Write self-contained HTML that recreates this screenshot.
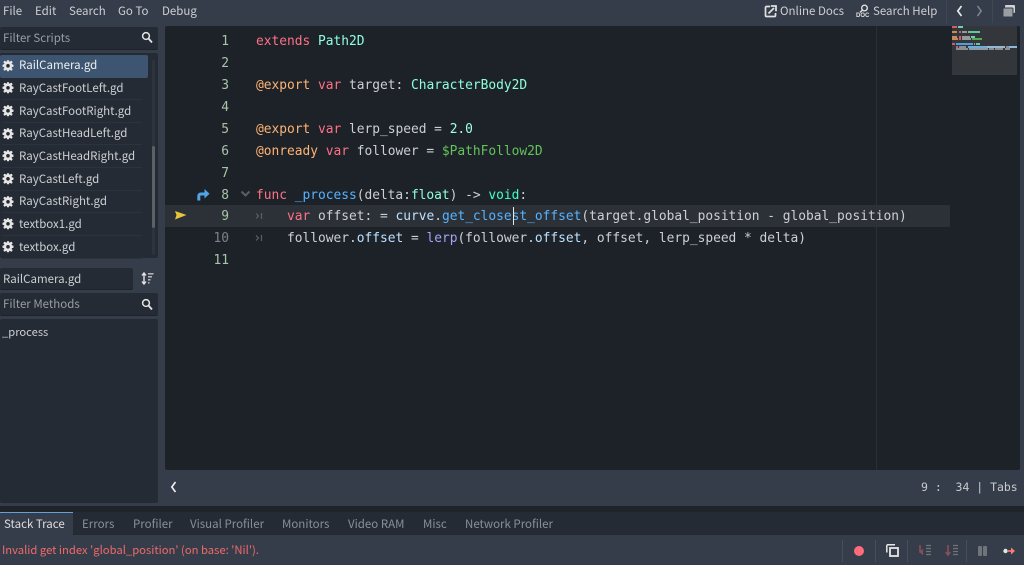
<!DOCTYPE html>
<html><head><meta charset="utf-8">
<style>
html,body{margin:0;padding:0;width:1024px;height:565px;overflow:hidden;background:#363d4a}
div,span,svg{position:absolute;box-sizing:border-box}
span.c,span.c span{position:static}
.ui{font-family:"Noto Sans CJK SC","Liberation Sans",sans-serif;font-size:11.5px;line-height:16px;color:#cdcfd2;white-space:nowrap}
.dim{color:#8b8f96}
.code{font-family:"DejaVu Sans Mono","Liberation Mono",monospace;font-size:12.9px;letter-spacing:-.015px;line-height:18px;color:#cdcfd2;white-space:pre;left:256px}
.n{font-family:"DejaVu Sans Mono","Liberation Mono",monospace;font-size:12.9px;line-height:18px;width:24px;text-align:right;left:205px;color:#a8c4a8}
.r{color:#ff7085}.g{color:#42ffc2}.t{color:#8effda}.a{color:#ffb373}.b{color:#57b3ff}.l{color:#a3a3f5}.m{color:#bce0ff}.s{color:#a1ffe0}.p{color:#ffeda1}.gn{color:#63c259}
.panel{background:#252b34;border-radius:2px}
.sep{left:2px;width:140px;height:1px;background:#2d333d}
.mm{height:2px}
</style></head><body>
<div class="ui" style="left:3px;top:3px;">File</div>
<div class="ui" style="left:35px;top:3px;">Edit</div>
<div class="ui" style="left:69px;top:3px;">Search</div>
<div class="ui" style="left:118px;top:3px;">Go To</div>
<div class="ui" style="left:162px;top:3px;">Debug</div>

<svg style="left:764px;top:5px" width="13" height="13" viewBox="0 0 13 13"><path d="M6 1.500H2.500a1 1 0 0 0-1 1v8a1 1 0 0 0 1 1h8a1 1 0 0 0 1-1V8" fill="none" stroke="#e0e0e0" stroke-width="1.700"/><path d="M4.500 8.500 10 3M6.800 1h5.200v5.200" fill="none" stroke="#e0e0e0" stroke-width="1.800"/></svg>
<div class="ui" style="left:780px;top:3px;">Online Docs</div>
<svg style="left:857px;top:4px" width="13" height="10" viewBox="0 0 13 10"><circle cx="7.500" cy="4" r="2.800" fill="none" stroke="#e0e0e0" stroke-width="1.400"/><path d="M5.500 6 3 8.500" stroke="#e0e0e0" stroke-width="1.500"/></svg>
<div style="left:856px;top:13px;width:15px;height:6px;font:bold 6px/6px 'Liberation Sans',sans-serif;color:#e0e0e0;white-space:nowrap">DOC</div>
<div class="ui" style="left:873px;top:3px;">Search Help</div>
<div style="left:946px;top:0;width:1px;height:23px;background:#414854"></div>
<svg style="left:955px;top:4px" width="9" height="14" viewBox="0 0 9 14"><path d="M6.500 2 2.800 7l3.700 5" fill="none" stroke="#e8e8e8" stroke-width="1.700"/></svg>
<svg style="left:975px;top:4px" width="9" height="14" viewBox="0 0 9 14"><path d="M2.500 2 6.200 7l-3.700 5" fill="none" stroke="#80848b" stroke-width="1.500"/></svg>
<div style="left:992px;top:0;width:1px;height:23px;background:#414854"></div>
<svg style="left:1002px;top:4px" width="14" height="14" viewBox="0 0 14 14"><rect x="3" y="1" width="10" height="8" rx="1" fill="#d0d2d5"/><rect x="1" y="4" width="10" height="9" rx="1" fill="#9a9ea4" stroke="#363d4a"/></svg>

<!-- Left column -->
<div class="panel" style="left:0;top:27px;width:158px;height:23px;border-bottom:1px solid #1e2329"></div>
<div class="ui dim" style="left:3px;top:30px;color:#9a9da3">Filter Scripts</div>
<svg style="left:141px;top:31px" width="12" height="13" viewBox="0 0 12 13"><circle cx="5" cy="5" r="3.400" fill="none" stroke="#e4e4e4" stroke-width="1.500"/><path d="M7.500 7.500 11 11.500" stroke="#e4e4e4" stroke-width="1.800"/></svg>

<div class="panel" style="left:0;top:53px;width:158px;height:205px"></div>
<div style="left:0;top:55px;width:148px;height:23px;background:#3d5570;border-radius:2px"></div>
<div class="sep" style="top:99px"></div><div class="sep" style="top:122px"></div><div class="sep" style="top:144px"></div><div class="sep" style="top:167px"></div><div class="sep" style="top:190px"></div><div class="sep" style="top:212px"></div><div class="sep" style="top:235px"></div><div class="sep" style="top:258px"></div>
<div style="left:152px;top:60px;width:3px;height:195px;background:#2e343e;border-radius:2px"></div>
<div style="left:152px;top:146px;width:3px;height:82px;background:#5c6067;border-radius:2px"></div>

<svg width="0" height="0" style="left:0;top:0"><defs><g id="gear"><path d="M5 .5h2l.3 1.500 1-.5 1.400-.6 1 1.600-1.100 1.100.3.9 1.600.4v2l-1.600.4-.3.9 1.100 1.100-1 1.600-1.400-.6-1-.4-.3 1.600H5l-.3-1.600-1 .4-1.400.6-1-1.600 1.100-1.100-.3-.9L.5 6.900v-2l1.600-.4.3-.9L1.300 2.500l1-1.600 1.400.6 1 .5z" fill="#e6e6e6" transform="translate(0 -.2)"/><circle cx="6" cy="5.800" r="1.800" fill="#252b34"/></g></defs></svg>
<svg style="left:2px;top:60px" width="12" height="12"><use href="#gear"/></svg>
<svg style="left:2px;top:82px" width="12" height="12"><use href="#gear"/></svg>
<svg style="left:2px;top:105px" width="12" height="12"><use href="#gear"/></svg>
<svg style="left:2px;top:128px" width="12" height="12"><use href="#gear"/></svg>
<svg style="left:2px;top:150px" width="12" height="12"><use href="#gear"/></svg>
<svg style="left:2px;top:173px" width="12" height="12"><use href="#gear"/></svg>
<svg style="left:2px;top:196px" width="12" height="12"><use href="#gear"/></svg>
<svg style="left:2px;top:218px" width="12" height="12"><use href="#gear"/></svg>
<svg style="left:2px;top:241px" width="12" height="12"><use href="#gear"/></svg>
<div class="ui" style="left:19px;top:57px;color:#eceef0">RailCamera.gd</div>
<div class="ui" style="left:19px;top:80px;">RayCastFootLeft.gd</div>
<div class="ui" style="left:19px;top:103px;">RayCastFootRight.gd</div>
<div class="ui" style="left:19px;top:125px;">RayCastHeadLeft.gd</div>
<div class="ui" style="left:19px;top:148px;">RayCastHeadRight.gd</div>
<div class="ui" style="left:19px;top:171px;">RayCastLeft.gd</div>
<div class="ui" style="left:19px;top:193px;">RayCastRight.gd</div>
<div class="ui" style="left:19px;top:216px;">textbox1.gd</div>
<div class="ui" style="left:19px;top:239px;">textbox.gd</div>

<div class="panel" style="left:0;top:268px;width:133px;height:22px;border-bottom:1px solid #1e2329"></div>
<div class="ui" style="left:3px;top:271px;">RailCamera.gd</div>
<svg style="left:141px;top:272px" width="13" height="13" viewBox="0 0 13 13"><path d="M3 1v11M1 3.500 3 1l2 2.500M1 9.500 3 12l2-2.500" fill="none" stroke="#e4e4e4" stroke-width="1.400"/><path d="M7 1.800h5.500M7 4.800h4M7 7.800h2.500M7 10.800h1.500" stroke="#c8c8c8" stroke-width="1.300"/></svg>
<div class="panel" style="left:0;top:293px;width:158px;height:23px;border-bottom:1px solid #1e2329"></div>
<div class="ui" style="left:3px;top:296px;color:#9a9da3">Filter Methods</div>
<svg style="left:141px;top:298px" width="12" height="13" viewBox="0 0 12 13"><circle cx="5" cy="5" r="3.400" fill="none" stroke="#e4e4e4" stroke-width="1.500"/><path d="M7.500 7.500 11 11.500" stroke="#e4e4e4" stroke-width="1.800"/></svg>
<div class="panel" style="left:0;top:319px;width:158px;height:184px"></div>
<div class="ui" style="left:2px;top:324px;font-size:11.2px">_process</div>

<!-- Editor -->
<div style="left:165px;top:26px;width:855px;height:444px;background:#1d2229;border-radius:2px"></div>
<div style="left:876px;top:26px;width:1px;height:444px;background:#2a2f37"></div>
<div style="left:165px;top:205px;width:785px;height:22px;background:#2c3138"></div>
<div style="left:952px;top:26px;width:65px;height:49px;background:#33363b"></div>
<!-- Minimap -->
<div class="mm" style="left:952px;top:26px;width:5px;background:#c95f6e"></div><div class="mm" style="left:958px;top:26px;width:5px;background:#6fd0b0"></div>
<div class="mm" style="left:952px;top:31px;width:5px;background:#c98a55"></div><div class="mm" style="left:959px;top:31px;width:2px;background:#c95f6e"></div><div class="mm" style="left:962px;top:31px;width:5px;background:#999"></div><div class="mm" style="left:968px;top:31px;width:12px;background:#5fc8a0"></div>
<div class="mm" style="left:952px;top:36px;width:5px;background:#c98a55"></div><div class="mm" style="left:959px;top:36px;width:2px;background:#c95f6e"></div><div class="mm" style="left:962px;top:36px;width:8px;background:#999"></div><div class="mm" style="left:971px;top:36px;width:4px;background:#6fd0b0"></div>
<div class="mm" style="left:952px;top:38px;width:6px;background:#c98a55"></div><div class="mm" style="left:959px;top:38px;width:2px;background:#c95f6e"></div><div class="mm" style="left:962px;top:38px;width:9px;background:#999"></div><div class="mm" style="left:972px;top:38px;width:10px;background:#55a855"></div>
<div class="mm" style="left:952px;top:43px;width:3px;background:#c95f6e"></div><div class="mm" style="left:956px;top:43px;width:17px;background:#4f9fdc"></div><div class="mm" style="left:974px;top:43px;width:1px;background:#999"></div><div class="mm" style="left:976px;top:43px;width:4px;background:#5fc8a0"></div>
<div class="mm" style="left:956px;top:46px;width:2px;background:#c95f6e"></div><div class="mm" style="left:959px;top:46px;width:7px;background:#8a8d92"></div><div class="mm" style="left:968px;top:46px;width:19px;background:#6faad8"></div><div class="mm" style="left:987px;top:46px;width:18px;background:#9ab8d0"></div><div class="mm" style="left:1006px;top:46px;width:3px;background:#8a8d92"></div><div class="mm" style="left:1009px;top:46px;width:8px;background:#8cb8dc"></div>
<div class="mm" style="left:956px;top:48px;width:12px;background:#8a8d92"></div><div class="mm" style="left:969px;top:48px;width:19px;background:#8a9aa8"></div><div class="mm" style="left:989px;top:48px;width:5px;background:#8a8d92"></div><div class="mm" style="left:995px;top:48px;width:8px;background:#8a8d92"></div><div class="mm" style="left:1005px;top:48px;width:5px;background:#8a8d92"></div>

<!-- Gutter -->
<div class="n" style="top:33px;">1</div>
<div class="n" style="top:55px;">2</div>
<div class="n" style="top:77px;">3</div>
<div class="n" style="top:99px;">4</div>
<div class="n" style="top:121px;">5</div>
<div class="n" style="top:143px;">6</div>
<div class="n" style="top:165px;">7</div>
<div class="n" style="top:187px;">8</div>
<div class="n" style="top:208px;">9</div>
<div class="n" style="top:230px;color:#7d8187">10</div>
<div class="n" style="top:252px;">11</div>

<svg style="left:197px;top:188px" width="13" height="13" viewBox="0 0 13 13"><path d="M1.800 12.500V8a2 2 0 0 1 2-2H8" fill="none" stroke="#4ea6e8" stroke-width="3"/><path d="M7.500 1 12.500 5.800 7.500 10.500z" fill="#4ea6e8"/></svg>
<svg style="left:240px;top:190px" width="11" height="8" viewBox="0 0 11 8"><path d="M1.500 1.500 5.500 5.500 9.500 1.500" fill="none" stroke="#5a5f66" stroke-width="2"/></svg>
<svg style="left:175px;top:211px" width="12" height="9" viewBox="0 0 12 9"><path d="M0 0 11.500 4 0 8.500 1.500 4z" fill="#e8c43c"/></svg>
<svg style="left:255px;top:212px" width="8" height="8" viewBox="0 0 8 8"><path d="M1 1.500 3.500 4 1 6.500M6.500 1v6" fill="none" stroke="#5a5f66" stroke-width="1.200"/></svg>
<svg style="left:255px;top:234px" width="8" height="8" viewBox="0 0 8 8"><path d="M1 1.500 3.500 4 1 6.500M6.500 1v6" fill="none" stroke="#5a5f66" stroke-width="1.200"/></svg>

<!-- Code -->
<div class="code" style="top:33px;"><span class="c"><span class="r">extends</span> <span class="t">Path2D</span></span></div>
<div class="code" style="top:77px;"><span class="c"><span class="a">@export</span> <span class="r">var</span> target: <span class="t">CharacterBody2D</span></span></div>
<div class="code" style="top:121px;"><span class="c"><span class="a">@export</span> <span class="r">var</span> lerp_speed = <span class="s">2.0</span></span></div>
<div class="code" style="top:143px;"><span class="c"><span class="a">@onready</span> <span class="r">var</span> follower = <span class="gn">$PathFollow2D</span></span></div>
<div class="code" style="top:187px;"><span class="c"><span class="r">func</span> <span class="b">_process</span>(delta:<span class="t">float</span>) -&gt; <span class="g">void</span>:</span></div>
<div class="code" style="top:208px;left:287px;"><span class="c"><span class="r">var</span> offset: = <span class="m">curve</span>.<span class="b">get_closest_offset</span>(target.global_position - global_position)</span></div>
<div class="code" style="top:230px;left:287px;"><span class="c">follower.<span class="m">offset</span> = <span class="l">lerp</span>(follower.<span class="m">offset</span>, offset, lerp_speed * delta)</span></div>
<div style="left:513px;top:207px;width:1px;height:18px;background:#e6e8ea"></div>

<!-- Status -->
<svg style="left:169px;top:480px" width="9" height="14" viewBox="0 0 9 14"><path d="M6.500 2 2.800 7l3.700 5" fill="none" stroke="#ececec" stroke-width="1.700"/></svg>
<div class="code" style="left:921px;top:478px;font-size:11.5px;color:#c8cacd">9 :  34 | Tabs</div>

<!-- Bottom -->
<div style="left:0;top:506px;width:1024px;height:6px;background:#1f242b"></div>
<div style="left:0;top:512px;width:1024px;height:23px;background:#252b34"></div>
<div style="left:0;top:512px;width:73px;height:23px;background:#363d4a;border-top:1.5px solid #5fa0dd"></div>
<div class="ui" style="left:4px;top:516px;color:#dcdde0">Stack Trace</div>
<div class="ui dim" style="left:82px;top:516px;">Errors</div>
<div class="ui dim" style="left:133px;top:516px;">Profiler</div>
<div class="ui dim" style="left:190px;top:516px;">Visual Profiler</div>
<div class="ui dim" style="left:282px;top:516px;">Monitors</div>
<div class="ui dim" style="left:348px;top:516px;">Video RAM</div>
<div class="ui dim" style="left:423px;top:516px;">Misc</div>
<div class="ui dim" style="left:465px;top:516px;">Network Profiler</div>
<div class="ui" style="left:2px;top:542px;font-size:11.25px;color:#f06a6a">Invalid get index 'global_position' (on base: 'Nil').</div>

<div style="left:842px;top:540px;width:1px;height:22px;background:#474e5a"></div>
<div style="left:854px;top:546px;width:10px;height:10px;border-radius:50%;background:#ff6b7a"></div>
<div style="left:875px;top:540px;width:1px;height:22px;background:#474e5a"></div>
<svg style="left:886px;top:544px" width="13" height="13" viewBox="0 0 13 13"><path d="M.8 8.500V1.800a1 1 0 0 1 1-1H9" fill="none" stroke="#e6e6e6" stroke-width="1.500"/><rect x="4" y="4" width="8" height="8" fill="none" stroke="#e6e6e6" stroke-width="1.800"/></svg>
<div style="left:907px;top:540px;width:1px;height:22px;background:#474e5a"></div>
<svg style="left:918px;top:544px" width="14" height="13" viewBox="0 0 14 13"><path d="M2 1v7h3M5 5.500 2.800 8 5 10.500" fill="none" stroke="#8a4f58" stroke-width="1.600"/><path d="M8 1.500h5M8 4.500h5M8 7.500h5M8 10.500h5" stroke="#6f747b" stroke-width="1.300"/></svg>
<svg style="left:945px;top:544px" width="14" height="13" viewBox="0 0 14 13"><path d="M3 1v9M.8 8 3 11l2.200-3" fill="none" stroke="#8a4f58" stroke-width="1.600"/><path d="M8 1.500h5M8 4.500h5M8 7.500h5M8 10.500h5" stroke="#6f747b" stroke-width="1.300"/></svg>
<div style="left:966px;top:540px;width:1px;height:22px;background:#474e5a"></div>
<div style="left:978px;top:546px;width:4px;height:10px;background:#70757c;border-radius:1px"></div>
<div style="left:983px;top:546px;width:4px;height:10px;background:#70757c;border-radius:1px"></div>
<svg style="left:1003px;top:546px" width="13" height="10" viewBox="0 0 13 10"><circle cx="2.500" cy="5" r="2.200" fill="#e6e6e6"/><path d="M5 5h5" stroke="#ff7a7a" stroke-width="1.600"/><path d="M8 1.500 12 5 8 8.500z" fill="#ff7a7a"/></svg>
</body></html>
